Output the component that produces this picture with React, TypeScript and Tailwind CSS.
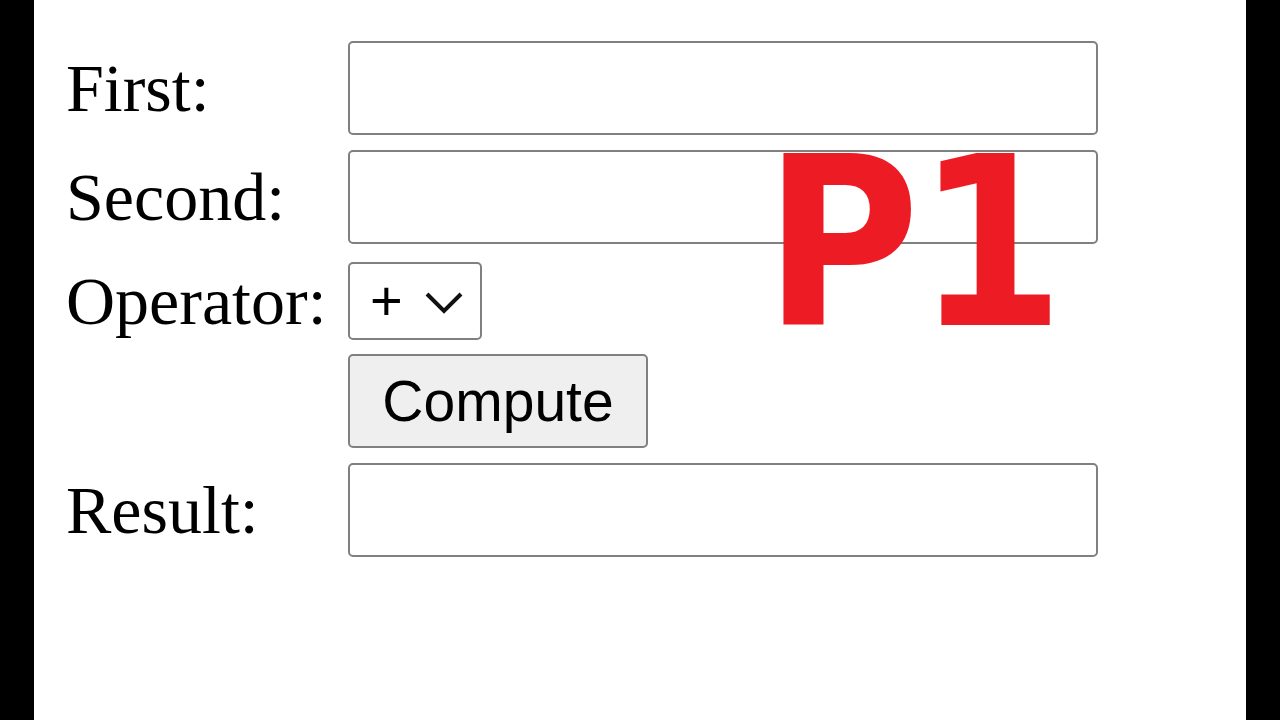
import React from "react";

const labelCls = "w-[282px] shrink-0 text-[68px] leading-none text-black [font-family:'Liberation_Serif',serif]";
const boxCls = "w-[750px] h-[94px] border-2 border-[#808080] rounded-[5px] bg-white";

const App: React.FC = () => {
  return (
    <div className="w-[1280px] h-[720px] bg-black overflow-hidden">
      <div className="relative mx-auto w-[1212px] h-[720px] bg-white pl-[32px] pt-[41px]">
        <div className="flex items-center h-[94px]">
          <label className={labelCls}>First:</label>
          <div className={boxCls}></div>
        </div>
        <div className="flex items-center h-[94px] mt-[15px]">
          <label className={labelCls}>Second:</label>
          <div className={boxCls}></div>
        </div>
        <div className="flex items-center h-[78px] mt-[18px]">
          <label className={labelCls}>Operator:</label>
          <div className="w-[134px] h-[78px] border-2 border-[#808080] rounded-[5px] bg-white flex items-center pl-[20px] gap-[22px]">
            <span className="text-[56px] leading-none text-black [font-family:'Liberation_Sans',sans-serif]">+</span>
            <svg width="38" height="24" viewBox="0 0 38 24" className="mt-[4px]">
              <polyline points="2,3 19,20 36,3" fill="none" stroke="#111" strokeWidth="4" strokeLinejoin="miter" />
            </svg>
          </div>
        </div>
        <div className="flex items-center h-[94px] mt-[14px]">
          <div className="w-[282px] shrink-0"></div>
          <button className="w-[300px] h-[94px] border-2 border-[#808080] rounded-[5px] bg-[#efefef] text-[57px] leading-none text-black [font-family:'Liberation_Sans',sans-serif]">
            Compute
          </button>
        </div>
        <div className="flex items-center h-[94px] mt-[15px]">
          <label className={labelCls}>Result:</label>
          <div className={boxCls}></div>
        </div>

        <div className="absolute left-[730px] top-[126px] text-[#ed1c24] text-[236px] font-bold leading-none tracking-[-3px] [font-family:'DejaVu_Sans_Condensed','DejaVu_Sans',sans-serif]">
          P1
        </div>
      </div>
    </div>
  );
};

export default App;
